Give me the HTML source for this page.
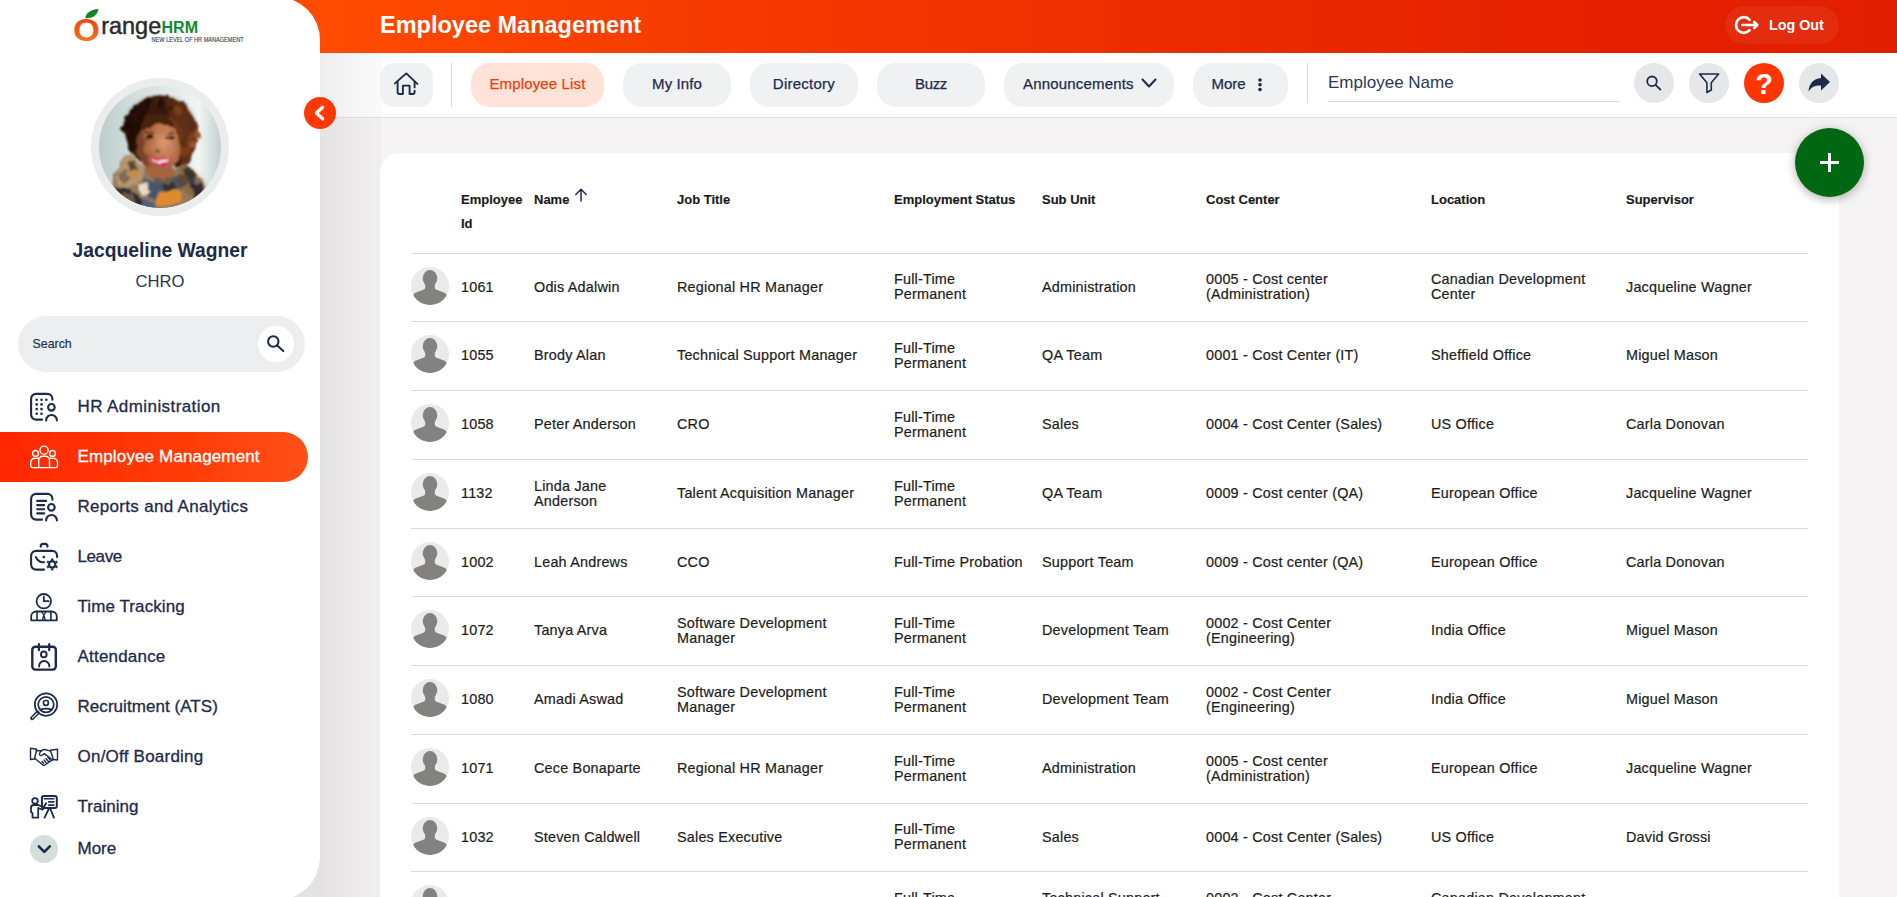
<!DOCTYPE html>
<html lang="en">
<head>
<meta charset="utf-8">
<title>Employee Management</title>
<style>
*{box-sizing:border-box;margin:0;padding:0}
html,body{width:1897px;height:897px;overflow:hidden;background:#f5f3f4;font-family:"Liberation Sans",sans-serif;color:#1e2a4a}
body{position:relative}
svg{display:block;overflow:visible}
#hdr{position:absolute;z-index:2;left:0;top:0;width:1897px;height:53px;background:linear-gradient(90deg,#ff4b00 17%,#f63a00 38%,#ec2c00 62%,#e42000 85%,#e21e00 100%)}
#hdr h1{position:absolute;left:380px;top:11px;font-size:23.5px;line-height:28px;font-weight:bold;color:#fff;white-space:nowrap}
#logout{position:absolute;left:1725px;top:6px;width:114px;height:38px;border-radius:19px;background:rgba(255,255,255,.06);color:#fff;font-size:14.3px;font-weight:bold}
#logout span{position:absolute;left:44px;top:10px;line-height:18px;white-space:nowrap}
#logout svg{position:absolute;left:8px;top:8px}
#nav{position:absolute;z-index:0;left:320px;top:53px;width:1577px;height:65px;background:#fff;border-bottom:1px solid #e2e5e5}
#shadow{position:absolute;z-index:1;left:280px;top:53px;width:102px;height:850px;background:linear-gradient(90deg,rgba(0,0,0,.07) 0,rgba(0,0,0,.07) 40px,rgba(0,0,0,.04) 72px,rgba(0,0,0,.02) 102px)}
#side{position:absolute;z-index:3;left:0;top:-3px;width:320px;height:903px;background:#fff;border-radius:0 43px 43px 0}
#top{position:absolute;z-index:4;left:0;top:0;width:1897px;height:897px;pointer-events:none}
.pill{position:absolute;top:63px;height:44px;border-radius:19px;background:#eff1f3;font-size:15px;color:#1e2a4a;text-align:center;line-height:41px;white-space:nowrap;-webkit-text-stroke:.25px currentColor}
.pill.act{background:#ffe3d8;color:#f23c0a}
.vdiv{position:absolute;top:63px;width:1px;height:40px;background:#cfd9d7}
.cbtn{position:absolute;top:63px;width:40px;height:40px;border-radius:50%;background:#e5e7e8}
.cbtn svg{position:absolute;left:0;top:0}
.mi{position:absolute;left:77.5px;font-size:17px;line-height:22px;color:#1e2a4a;white-space:nowrap;-webkit-text-stroke:.3px currentColor}
.ico{position:absolute;left:30px;width:28px;height:28px}
#card{position:absolute;z-index:1;left:380px;top:153px;width:1459px;height:760px;background:#fff;border-radius:20px 0 0 0}
.th{position:absolute;top:187px;font-size:13px;font-weight:bold;color:#1a1a1a;line-height:24px;white-space:nowrap;-webkit-text-stroke:.15px currentColor}
.row{position:absolute;left:31px;width:1397px;height:69px;border-top:1px solid #dadada}
.row div{position:absolute;top:-0.9px;height:68px;display:flex;align-items:center;font-size:14.4px;letter-spacing:.2px;color:#1c1c1c;line-height:15px;white-space:nowrap;-webkit-text-stroke:.2px currentColor}
.row svg{position:absolute;left:0;top:13px}
</style>
</head>
<body>
<div id="hdr"><h1>Employee Management</h1>
<div id="logout"><svg width="30" height="22" viewBox="0 0 30 22" fill="none" stroke="#fff" stroke-width="2.7" stroke-linecap="round" stroke-linejoin="round"><path d="M16.6 5.8A7.8 7.8 0 1 0 16.6 16.2"/><path d="M9.3 11H24M21.2 8l3 3-3 3"/></svg><span>Log Out</span></div>
</div>
<div id="nav"></div>
<div id="shadow"></div>
<div id="card">
<div class="th" style="left:81px;top:35px">Employee<br>Id</div>
<div class="th" style="left:154px;top:35px">Name<svg style="position:absolute;left:40px;top:0px" width="14" height="14" viewBox="0 0 14 14" fill="none" stroke="#1e2a4a" stroke-width="1.5" stroke-linecap="round" stroke-linejoin="round"><path d="M7 13V1.5M1.8 6.5L7 1.3l5.2 5.2"/></svg></div>
<div class="th" style="left:297px;top:35px">Job Title</div>
<div class="th" style="left:514px;top:35px">Employment Status</div>
<div class="th" style="left:662px;top:35px">Sub Unit</div>
<div class="th" style="left:826px;top:35px">Cost Center</div>
<div class="th" style="left:1051px;top:35px">Location</div>
<div class="th" style="left:1246px;top:35px">Supervisor</div>
<div class="row" style="top:100px;height:68px"><svg width="38" height="38" viewBox="0 0 38 38"><defs><clipPath id="c0"><circle cx="19" cy="19" r="19"/></clipPath></defs><circle cx="19" cy="19" r="19" fill="#eaeaea"/><g clip-path="url(#c0)" fill="#848281"><ellipse cx="19" cy="11.3" rx="7.3" ry="8.3"/><path d="M14.2 14h9.6v6.5c0 1.2.8 1.8 2.5 2.4l6.7 2.6c1.5.6 2.5 1.5 3 3V39H2V28.5c.5-1.5 1.5-2.4 3-3l6.7-2.6c1.7-.6 2.5-1.2 2.5-2.4z"/></g></svg><div style="left:50px;height:68px"><span>1061</span></div><div style="left:123px;height:68px"><span>Odis Adalwin</span></div><div style="left:266px;height:68px"><span>Regional HR Manager</span></div><div style="left:483px;height:68px"><span>Full-Time<br>Permanent</span></div><div style="left:631px;height:68px"><span>Administration</span></div><div style="left:795px;height:68px"><span>0005 - Cost center<br>(Administration)</span></div><div style="left:1020px;height:68px"><span>Canadian Development<br>Center</span></div><div style="left:1215px;height:68px"><span>Jacqueline Wagner</span></div></div>
<div class="row" style="top:168px;height:69px"><svg width="38" height="38" viewBox="0 0 38 38"><defs><clipPath id="c1"><circle cx="19" cy="19" r="19"/></clipPath></defs><circle cx="19" cy="19" r="19" fill="#eaeaea"/><g clip-path="url(#c1)" fill="#848281"><ellipse cx="19" cy="11.3" rx="7.3" ry="8.3"/><path d="M14.2 14h9.6v6.5c0 1.2.8 1.8 2.5 2.4l6.7 2.6c1.5.6 2.5 1.5 3 3V39H2V28.5c.5-1.5 1.5-2.4 3-3l6.7-2.6c1.7-.6 2.5-1.2 2.5-2.4z"/></g></svg><div style="left:50px;height:69px"><span>1055</span></div><div style="left:123px;height:69px"><span>Brody Alan</span></div><div style="left:266px;height:69px"><span>Technical Support Manager</span></div><div style="left:483px;height:69px"><span>Full-Time<br>Permanent</span></div><div style="left:631px;height:69px"><span>QA Team</span></div><div style="left:795px;height:69px"><span>0001 - Cost Center (IT)</span></div><div style="left:1020px;height:69px"><span>Sheffield Office</span></div><div style="left:1215px;height:69px"><span>Miguel Mason</span></div></div>
<div class="row" style="top:237px;height:69px"><svg width="38" height="38" viewBox="0 0 38 38"><defs><clipPath id="c2"><circle cx="19" cy="19" r="19"/></clipPath></defs><circle cx="19" cy="19" r="19" fill="#eaeaea"/><g clip-path="url(#c2)" fill="#848281"><ellipse cx="19" cy="11.3" rx="7.3" ry="8.3"/><path d="M14.2 14h9.6v6.5c0 1.2.8 1.8 2.5 2.4l6.7 2.6c1.5.6 2.5 1.5 3 3V39H2V28.5c.5-1.5 1.5-2.4 3-3l6.7-2.6c1.7-.6 2.5-1.2 2.5-2.4z"/></g></svg><div style="left:50px;height:69px"><span>1058</span></div><div style="left:123px;height:69px"><span>Peter Anderson</span></div><div style="left:266px;height:69px"><span>CRO</span></div><div style="left:483px;height:69px"><span>Full-Time<br>Permanent</span></div><div style="left:631px;height:69px"><span>Sales</span></div><div style="left:795px;height:69px"><span>0004 - Cost Center (Sales)</span></div><div style="left:1020px;height:69px"><span>US Office</span></div><div style="left:1215px;height:69px"><span>Carla Donovan</span></div></div>
<div class="row" style="top:306px;height:69px"><svg width="38" height="38" viewBox="0 0 38 38"><defs><clipPath id="c3"><circle cx="19" cy="19" r="19"/></clipPath></defs><circle cx="19" cy="19" r="19" fill="#eaeaea"/><g clip-path="url(#c3)" fill="#848281"><ellipse cx="19" cy="11.3" rx="7.3" ry="8.3"/><path d="M14.2 14h9.6v6.5c0 1.2.8 1.8 2.5 2.4l6.7 2.6c1.5.6 2.5 1.5 3 3V39H2V28.5c.5-1.5 1.5-2.4 3-3l6.7-2.6c1.7-.6 2.5-1.2 2.5-2.4z"/></g></svg><div style="left:50px;height:69px"><span>1132</span></div><div style="left:123px;height:69px"><span>Linda Jane<br>Anderson</span></div><div style="left:266px;height:69px"><span>Talent Acquisition Manager</span></div><div style="left:483px;height:69px"><span>Full-Time<br>Permanent</span></div><div style="left:631px;height:69px"><span>QA Team</span></div><div style="left:795px;height:69px"><span>0009 - Cost center (QA)</span></div><div style="left:1020px;height:69px"><span>European Office</span></div><div style="left:1215px;height:69px"><span>Jacqueline Wagner</span></div></div>
<div class="row" style="top:375px;height:68px"><svg width="38" height="38" viewBox="0 0 38 38"><defs><clipPath id="c4"><circle cx="19" cy="19" r="19"/></clipPath></defs><circle cx="19" cy="19" r="19" fill="#eaeaea"/><g clip-path="url(#c4)" fill="#848281"><ellipse cx="19" cy="11.3" rx="7.3" ry="8.3"/><path d="M14.2 14h9.6v6.5c0 1.2.8 1.8 2.5 2.4l6.7 2.6c1.5.6 2.5 1.5 3 3V39H2V28.5c.5-1.5 1.5-2.4 3-3l6.7-2.6c1.7-.6 2.5-1.2 2.5-2.4z"/></g></svg><div style="left:50px;height:68px"><span>1002</span></div><div style="left:123px;height:68px"><span>Leah Andrews</span></div><div style="left:266px;height:68px"><span>CCO</span></div><div style="left:483px;height:68px"><span>Full-Time Probation</span></div><div style="left:631px;height:68px"><span>Support Team</span></div><div style="left:795px;height:68px"><span>0009 - Cost center (QA)</span></div><div style="left:1020px;height:68px"><span>European Office</span></div><div style="left:1215px;height:68px"><span>Carla Donovan</span></div></div>
<div class="row" style="top:443px;height:69px"><svg width="38" height="38" viewBox="0 0 38 38"><defs><clipPath id="c5"><circle cx="19" cy="19" r="19"/></clipPath></defs><circle cx="19" cy="19" r="19" fill="#eaeaea"/><g clip-path="url(#c5)" fill="#848281"><ellipse cx="19" cy="11.3" rx="7.3" ry="8.3"/><path d="M14.2 14h9.6v6.5c0 1.2.8 1.8 2.5 2.4l6.7 2.6c1.5.6 2.5 1.5 3 3V39H2V28.5c.5-1.5 1.5-2.4 3-3l6.7-2.6c1.7-.6 2.5-1.2 2.5-2.4z"/></g></svg><div style="left:50px;height:69px"><span>1072</span></div><div style="left:123px;height:69px"><span>Tanya Arva</span></div><div style="left:266px;height:69px"><span>Software Development<br>Manager</span></div><div style="left:483px;height:69px"><span>Full-Time<br>Permanent</span></div><div style="left:631px;height:69px"><span>Development Team</span></div><div style="left:795px;height:69px"><span>0002 - Cost Center<br>(Engineering)</span></div><div style="left:1020px;height:69px"><span>India Office</span></div><div style="left:1215px;height:69px"><span>Miguel Mason</span></div></div>
<div class="row" style="top:512px;height:69px"><svg width="38" height="38" viewBox="0 0 38 38"><defs><clipPath id="c6"><circle cx="19" cy="19" r="19"/></clipPath></defs><circle cx="19" cy="19" r="19" fill="#eaeaea"/><g clip-path="url(#c6)" fill="#848281"><ellipse cx="19" cy="11.3" rx="7.3" ry="8.3"/><path d="M14.2 14h9.6v6.5c0 1.2.8 1.8 2.5 2.4l6.7 2.6c1.5.6 2.5 1.5 3 3V39H2V28.5c.5-1.5 1.5-2.4 3-3l6.7-2.6c1.7-.6 2.5-1.2 2.5-2.4z"/></g></svg><div style="left:50px;height:69px"><span>1080</span></div><div style="left:123px;height:69px"><span>Amadi Aswad</span></div><div style="left:266px;height:69px"><span>Software Development<br>Manager</span></div><div style="left:483px;height:69px"><span>Full-Time<br>Permanent</span></div><div style="left:631px;height:69px"><span>Development Team</span></div><div style="left:795px;height:69px"><span>0002 - Cost Center<br>(Engineering)</span></div><div style="left:1020px;height:69px"><span>India Office</span></div><div style="left:1215px;height:69px"><span>Miguel Mason</span></div></div>
<div class="row" style="top:581px;height:69px"><svg width="38" height="38" viewBox="0 0 38 38"><defs><clipPath id="c7"><circle cx="19" cy="19" r="19"/></clipPath></defs><circle cx="19" cy="19" r="19" fill="#eaeaea"/><g clip-path="url(#c7)" fill="#848281"><ellipse cx="19" cy="11.3" rx="7.3" ry="8.3"/><path d="M14.2 14h9.6v6.5c0 1.2.8 1.8 2.5 2.4l6.7 2.6c1.5.6 2.5 1.5 3 3V39H2V28.5c.5-1.5 1.5-2.4 3-3l6.7-2.6c1.7-.6 2.5-1.2 2.5-2.4z"/></g></svg><div style="left:50px;height:69px"><span>1071</span></div><div style="left:123px;height:69px"><span>Cece Bonaparte</span></div><div style="left:266px;height:69px"><span>Regional HR Manager</span></div><div style="left:483px;height:69px"><span>Full-Time<br>Permanent</span></div><div style="left:631px;height:69px"><span>Administration</span></div><div style="left:795px;height:69px"><span>0005 - Cost center<br>(Administration)</span></div><div style="left:1020px;height:69px"><span>European Office</span></div><div style="left:1215px;height:69px"><span>Jacqueline Wagner</span></div></div>
<div class="row" style="top:650px;height:68px"><svg width="38" height="38" viewBox="0 0 38 38"><defs><clipPath id="c8"><circle cx="19" cy="19" r="19"/></clipPath></defs><circle cx="19" cy="19" r="19" fill="#eaeaea"/><g clip-path="url(#c8)" fill="#848281"><ellipse cx="19" cy="11.3" rx="7.3" ry="8.3"/><path d="M14.2 14h9.6v6.5c0 1.2.8 1.8 2.5 2.4l6.7 2.6c1.5.6 2.5 1.5 3 3V39H2V28.5c.5-1.5 1.5-2.4 3-3l6.7-2.6c1.7-.6 2.5-1.2 2.5-2.4z"/></g></svg><div style="left:50px;height:68px"><span>1032</span></div><div style="left:123px;height:68px"><span>Steven Caldwell</span></div><div style="left:266px;height:68px"><span>Sales Executive</span></div><div style="left:483px;height:68px"><span>Full-Time<br>Permanent</span></div><div style="left:631px;height:68px"><span>Sales</span></div><div style="left:795px;height:68px"><span>0004 - Cost Center (Sales)</span></div><div style="left:1020px;height:68px"><span>US Office</span></div><div style="left:1215px;height:68px"><span>David Grossi</span></div></div>
<div class="row" style="top:718px;height:69px"><svg width="38" height="38" viewBox="0 0 38 38"><defs><clipPath id="c9"><circle cx="19" cy="19" r="19"/></clipPath></defs><circle cx="19" cy="19" r="19" fill="#eaeaea"/><g clip-path="url(#c9)" fill="#848281"><ellipse cx="19" cy="11.3" rx="7.3" ry="8.3"/><path d="M14.2 14h9.6v6.5c0 1.2.8 1.8 2.5 2.4l6.7 2.6c1.5.6 2.5 1.5 3 3V39H2V28.5c.5-1.5 1.5-2.4 3-3l6.7-2.6c1.7-.6 2.5-1.2 2.5-2.4z"/></g></svg><div style="left:50px;height:69px"><span>1048</span></div><div style="left:123px;height:69px"><span>Kevin Chen</span></div><div style="left:266px;height:69px"><span>Technical Support Engineer</span></div><div style="left:483px;height:69px"><span>Full-Time<br>Permanent</span></div><div style="left:631px;height:69px"><span>Technical Support<br>Team</span></div><div style="left:795px;height:69px"><span>0002 - Cost Center<br>(Engineering)</span></div><div style="left:1020px;height:69px"><span>Canadian Development<br>Center</span></div><div style="left:1215px;height:69px"><span>Miguel Mason</span></div></div>
</div>
<div id="top">
<div class="pill" style="left:380px;width:53px;border-radius:14px"><svg style="position:absolute;left:13px;top:8px" width="26" height="26" viewBox="0 0 26 26" fill="none" stroke="#1e2a4a" stroke-width="1.9" stroke-linecap="round" stroke-linejoin="round"><path d="M1.9 12.4L13.3 2.4 24.4 12.9"/><path d="M4.6 10.5V21a2 2 0 0 0 2 2H9.9V14.6h6.7V23H19.6a2 2 0 0 0 2-2V19.6M21.6 16.4V10.6"/></svg></div>
<div class="vdiv" style="left:451px;height:44px"></div>
<div class="pill act" style="left:471px;width:133px;letter-spacing:.14px">Employee List</div>
<div class="pill" style="left:623px;width:108px;letter-spacing:.1px">My Info</div>
<div class="pill" style="left:750px;width:108px;letter-spacing:.25px">Directory</div>
<div class="pill" style="left:877px;width:108px;letter-spacing:-.3px">Buzz</div>
<div class="pill" style="left:1004px;width:170px;letter-spacing:.18px;text-align:left;padding-left:19px">Announcements<svg style="position:absolute;left:137px;top:15px" width="16" height="10" viewBox="0 0 16 10" fill="none" stroke="#1e2a4a" stroke-width="2" stroke-linecap="round" stroke-linejoin="round"><path d="M1.5 1.5L8 8.5l6.5-7"/></svg></div>
<div class="pill" style="left:1193px;width:95px;text-align:left;padding-left:18.5px">More<svg style="position:absolute;left:64px;top:14px" width="6" height="16" viewBox="0 0 6 16" fill="#1e2a4a"><circle cx="3" cy="3" r="1.8"/><circle cx="3" cy="7.8" r="1.8"/><circle cx="3" cy="12.6" r="1.8"/></svg></div>
<div class="vdiv" style="left:1307px"></div>
<div style="position:absolute;left:1328px;top:72px;font-size:17px;line-height:22px;color:#2b3855;white-space:nowrap">Employee Name</div>
<div style="position:absolute;left:1328px;top:101px;width:291px;height:1px;background:#d9dcdf"></div>
<div class="cbtn" style="left:1634px"><svg width="40" height="40" viewBox="0 0 40 40" fill="none" stroke="#1e2a4a" stroke-width="1.8" stroke-linecap="round"><circle cx="18" cy="18.3" r="4.8"/><path d="M21.6 21.9l4.8 4.7"/></svg></div>
<div class="cbtn" style="left:1689px"><svg width="40" height="40" viewBox="0 0 40 40" fill="none" stroke="#1e2a4a" stroke-width="1.6" stroke-linejoin="round"><path d="M10.6 11h19l-7.3 8.7v7.3l-4.4 2.5V19.7z"/></svg></div>
<div class="cbtn" style="left:1744px;background:#ff3503;color:#fff;font-weight:bold;font-size:29px;line-height:43px;text-align:center">?</div>
<div class="cbtn" style="left:1799px"><svg width="40" height="40" viewBox="0 0 40 40" fill="#1e2a4a"><path d="M22 10.5l9 8.5-9 8.5v-5c-6-.5-9.5 1.5-12.5 6 .5-7 4-12.5 12.5-13.5z"/></svg></div>
<div style="position:absolute;left:304px;top:97px;width:32px;height:32px;border-radius:50%;background:#ff3806"><svg width="32" height="32" viewBox="0 0 32 32" fill="none" stroke="#fff" stroke-width="3.3" stroke-linecap="round" stroke-linejoin="round"><path d="M18.6 10.2L12.3 16l6.3 5.8"/></svg></div>
<div style="position:absolute;left:1795px;top:128px;width:69px;height:69px;border-radius:50%;background:#006812;box-shadow:0 3px 8px rgba(0,0,0,.22),0 0 14px rgba(0,0,0,.1)"><svg width="69" height="69" viewBox=".5 .5 69 69" stroke="#fff" stroke-width="3" fill="none"><path d="M35 25.5v19M25.5 35h19"/></svg></div>
</div>
<div id="side"></div>
<div id="sidec" style="position:absolute;z-index:3;left:0;top:0;width:320px;height:897px">
<!-- logo -->
<svg style="position:absolute;left:70px;top:4px" width="180" height="44" viewBox="70 4 180 44">
<defs><linearGradient id="lgo" x1="0" y1="0" x2="0" y2="1"><stop offset="0" stop-color="#f23c10"/><stop offset=".55" stop-color="#f25a1a"/><stop offset="1" stop-color="#f6891f"/></linearGradient></defs>
<path d="M85.3 18.2C85.5 12.5 91 9.5 98.5 9 97.5 15.5 92 18.8 85.3 18.2z" fill="#178a2c"/>
<path d="M86 18C89 15 93 12 97 10" stroke="#0c5c1a" stroke-width=".6" fill="none"/>
<text y="33.8" font-family="Liberation Sans, sans-serif"><tspan x="73.1" y="40.9" font-size="30.5" font-weight="bold" fill="url(#lgo)" textLength="27" lengthAdjust="spacingAndGlyphs">O</tspan><tspan x="101.2" y="33.8" font-size="23.5" fill="#2a2a2e" stroke="#2a2a2e" stroke-width=".45" textLength="60" lengthAdjust="spacingAndGlyphs">range</tspan></text>
<text x="161.5" y="33" font-family="Liberation Sans, sans-serif" font-size="16" font-weight="bold" fill="#128a2e" textLength="36.5" lengthAdjust="spacingAndGlyphs">HRM</text>
<text x="151.6" y="41.8" font-family="Liberation Sans, sans-serif" font-size="6.8" fill="#3d4852" stroke="#3d4852" stroke-width=".15" textLength="92" lengthAdjust="spacingAndGlyphs">NEW LEVEL OF HR MANAGEMENT</text>
</svg>
<svg style="position:absolute;left:91px;top:78px" width="138" height="138" viewBox="91 78 138 138">
<defs><clipPath id="avc"><circle cx="160" cy="147" r="61"/></clipPath><filter id="bl1" x="-20%" y="-20%" width="140%" height="140%"><feTurbulence type="fractalNoise" baseFrequency=".11" numOctaves="2" seed="4" result="n"/><feDisplacementMap in="SourceGraphic" in2="n" scale="7" xChannelSelector="R" yChannelSelector="G" result="d"/><feGaussianBlur in="d" stdDeviation=".9"/></filter><filter id="bl2" x="-20%" y="-20%" width="140%" height="140%"><feGaussianBlur stdDeviation="2.6"/></filter><linearGradient id="avbg" x1="0" x2="1" y1="0" y2="0"><stop offset="0" stop-color="#bccaca"/><stop offset=".3" stop-color="#d3dede"/><stop offset=".62" stop-color="#e3eaea"/><stop offset=".8" stop-color="#f2f5f3"/><stop offset=".9" stop-color="#d5dfdf"/><stop offset="1" stop-color="#b9c7c8"/></linearGradient><radialGradient id="avsk" cx=".62" cy=".45" r=".7"><stop offset="0" stop-color="#dc9670"/><stop offset=".4" stop-color="#bd764e"/><stop offset="1" stop-color="#7c4228"/></radialGradient></defs>
<circle cx="160" cy="147" r="69" fill="#ebecec"/>
<g clip-path="url(#avc)">
<rect x="95" y="82" width="130" height="130" fill="url(#avbg)"/>
<g filter="url(#bl2)">
<ellipse cx="160" cy="127" rx="34" ry="29" fill="#3a1a0c"/>
<ellipse cx="162" cy="192" rx="44" ry="26" fill="#8c7458"/>
</g>
<g filter="url(#bl1)">
<path d="M124.7 121.1 131.2 109.5 142.8 99.4 155.9 95.8 170.4 97.9 182 103.7 192.1 115.3 197.2 126.9 196.4 140 195 150.1 189.2 163.2 182 169 173.3 163.2 138.5 160.3 130.5 151.6 126.2 137.1z" fill="#3a190b"/>
<path d="M163.1 99.4 176.2 100.8 187.8 109.5 196.4 124 197.2 140 193.6 153 187.8 163.9 182 167.5 179.8 151.6 182 137.1 178.3 124 170.4 113.9z" fill="#5e2d14"/>
<path d="M124.7 121.1 131.2 109.5 142.8 100.1 153 97.9 147.2 111 141.4 122.6 137 137.1 134.1 150.1 129.8 150.1 126.2 137.1z" fill="#200c06"/>
<circle cx="150" cy="103.7" r="2.2" fill="#2a1008"/>
<circle cx="155.5" cy="103.5" r="2.1" fill="#3e1b0c"/>
<circle cx="130.2" cy="127.4" r="3.9" fill="#1c0a05"/>
<circle cx="136.3" cy="108.7" r="3.4" fill="#1c0a05"/>
<circle cx="181.4" cy="154.4" r="2.7" fill="#5a2a12"/>
<circle cx="130.2" cy="121" r="2.4" fill="#1c0a05"/>
<circle cx="188.5" cy="115.4" r="2.2" fill="#5a2a12"/>
<circle cx="134.3" cy="113.1" r="2.8" fill="#1c0a05"/>
<circle cx="167.2" cy="101.3" r="3.6" fill="#3e1b0c"/>
<circle cx="183.2" cy="107.6" r="3.7" fill="#5a2a12"/>
<circle cx="181.4" cy="152.1" r="3.8" fill="#5a2a12"/>
<circle cx="171.4" cy="103.5" r="3.8" fill="#5a2a12"/>
<circle cx="190.9" cy="143.3" r="3.4" fill="#7a3e1a"/>
<circle cx="168.4" cy="100.2" r="3.1" fill="#5a2a12"/>
<circle cx="125.6" cy="128.3" r="4.3" fill="#1c0a05"/>
<circle cx="144.4" cy="105.7" r="2.1" fill="#2a1008"/>
<circle cx="134.4" cy="118.3" r="3.8" fill="#1c0a05"/>
<circle cx="140.1" cy="107" r="2.2" fill="#2a1008"/>
<circle cx="181.8" cy="106" r="4" fill="#5a2a12"/>
<circle cx="162" cy="100" r="4.2" fill="#2a1008"/>
<circle cx="134.3" cy="116.8" r="3.2" fill="#1c0a05"/>
<circle cx="143.4" cy="108.8" r="2.9" fill="#2a1008"/>
<circle cx="187" cy="150.4" r="3.5" fill="#7a3e1a"/>
<circle cx="124.1" cy="129.1" r="4.1" fill="#1c0a05"/>
<circle cx="158.8" cy="106.3" r="3.5" fill="#2a1008"/>
<circle cx="129.3" cy="128" r="2.8" fill="#1c0a05"/>
<circle cx="129.8" cy="135.2" r="2.9" fill="#1c0a05"/>
<circle cx="192.9" cy="141.4" r="2.6" fill="#7a3e1a"/>
<circle cx="155.2" cy="100.8" r="4.3" fill="#3e1b0c"/>
<circle cx="170.8" cy="107.6" r="2.8" fill="#3e1b0c"/>
<circle cx="191.8" cy="136.5" r="4.2" fill="#7a3e1a"/>
<circle cx="130.2" cy="120.3" r="3.3" fill="#2a1008"/>
<circle cx="194.1" cy="140.6" r="2.9" fill="#7a3e1a"/>
<circle cx="195.2" cy="130.5" r="2.8" fill="#7a3e1a"/>
<circle cx="198.1" cy="135.7" r="3.9" fill="#97552a"/>
<circle cx="192.6" cy="126.7" r="2.9" fill="#5a2a12"/>
<circle cx="128.5" cy="132.3" r="3.6" fill="#2a1008"/>
<circle cx="167.2" cy="99.7" r="4.2" fill="#3e1b0c"/>
<circle cx="138.1" cy="113.2" r="2.5" fill="#2a1008"/>
<circle cx="192.6" cy="145.2" r="3.5" fill="#97552a"/>
<circle cx="126.4" cy="124.9" r="3.8" fill="#1c0a05"/>
<circle cx="170.3" cy="102.1" r="2.8" fill="#5a2a12"/>
<circle cx="183.6" cy="151.4" r="4.2" fill="#7a3e1a"/>
<circle cx="134.4" cy="117.7" r="4.1" fill="#2a1008"/>
<circle cx="128.4" cy="117" r="3.6" fill="#1c0a05"/>
<circle cx="178.6" cy="111.2" r="4.3" fill="#7a3e1a"/>
<ellipse cx="158.8" cy="145.8" rx="21.7" ry="29.7" fill="url(#avsk)"/>
<path d="M145.7 167.5 173.3 169 176.2 183.4 150.1 186.3z" fill="#a8643e"/>
<path d="M138.5 129.8 142.8 118.2 155.9 113.2 170.4 114.6 179.1 122.6 182 134.2 176.2 128.4 163.1 124 150.1 125.5 141.4 134.2z" fill="#4a2210"/>
<path d="M167.5 115.3 179.1 121.1 183.4 135.6 180.5 142.9 178.3 131.3 173.3 124z" fill="#6e3618"/>
<path d="M136.3 137.1 142.8 129.8 144.3 151.6 150.1 169 142.8 163.2 137.8 150.1z" fill="#7a4228"/>
<ellipse cx="149.3" cy="137.8" rx="4.2" ry="1.7" fill="#2a1208"/>
<ellipse cx="149.3" cy="133.3" rx="5" ry="1" fill="#3a1a0c"/>
<ellipse cx="170.4" cy="137.8" rx="4.2" ry="1.7" fill="#2a1208"/>
<ellipse cx="170.4" cy="133.3" rx="5" ry="1" fill="#3a1a0c"/>
<ellipse cx="158.8" cy="150.1" rx="3.5" ry="2" fill="#9a5a3a"/>
<path d="M149.3 158.8 155.9 157.4 160.2 158.2 166 157.1 171.1 158.5 167.5 163.9 160.9 166.1 154.4 163.9z" fill="#cf2a5c"/>
<path d="M152.2 159.5 160.2 160 168.9 159.2 166 162 160.2 162.9 155.1 162z" fill="#f7e9e6"/>
<path d="M110.9 192.1 113.8 174.8 124 157.4 131.2 153 138.5 163.2 150.1 174.8 163.1 180.6 176.2 174.8 182 163.2 190.7 169 200.8 180.6 206.6 192.1 196.4 212.4 124 212.4z" fill="#94795a"/>
<path d="M124 157.4 131.2 153 138.5 163.2 144.3 171.9 138.5 183.4 128.3 189.2 116.7 186.3 116.7 174.8z" fill="#b3966f"/>
<path d="M142.8 177.7 155.9 182 167.5 182 176.2 176.2 182 186.3 176.2 197.9 160.2 202.3 147.2 196.5z" fill="#48536b"/>
<path d="M182 163.2 190.7 169 200.8 180.6 199.3 189.2 189.2 196.5 182 186.3 179.8 174.8z" fill="#8a6a48"/>
<path d="M115.3 187.8 128.3 189.2 138.5 195 142.8 206.6 124 209.5 113.8 197.9z" fill="#2b2a35"/>
<path d="M157.3 193.6 170.4 189.2 182 192.1 180.5 202.3 167.5 206.6 157.3 203.7z" fill="#dd8b2e"/>
<path d="M138.5 183.4 147.2 182 150.1 192.1 142.8 196.5z" fill="#e9dcc4"/>
<path d="M187.8 171.9 196.4 177.7 195 186.3 187.8 183.4z" fill="#3a4257"/>
<path d="M131.2 169 138.5 171.9 137 179.1 129.8 177.7z" fill="#c98a45"/>
<path d="M118.2 174.8 125.4 169 129.8 177.7 124 186.3z" fill="#7f6a55"/>
<path d="M176.2 176.2 184.9 174.8 189.2 183.4 182 189.2z" fill="#5b4a3a"/>
<path d="M150.1 174.8 163.1 180.6 173.3 176.2 170.4 183.4 155.9 183.4z" fill="#6b5a4a"/>
<path d="M190.7 183.4 202.2 183.4 205.1 195 193.6 197.9z" fill="#2f2c33"/>
<path d="M142.8 197.9 155.9 202.3 157.3 209.5 142.8 209.5z" fill="#55607a"/>
<path d="M126.9 163.2 134.1 160.3 137 169 129.8 171.9z" fill="#5a4632"/>
<path d="M182 169 189.2 167.5 195 176.2 187.8 180.6z" fill="#3d3028"/>
<path d="M163.1 183.4 173.3 182 176.2 189.2 164.6 190.7z" fill="#33302f"/>
<path d="M121.1 192.1 132.7 193.6 135.6 202.3 124 203.7z" fill="#6e5a44"/>
</g></g></svg>

<div style="position:absolute;left:0;top:239px;width:320px;text-align:center;font-size:19.3px;line-height:24px;font-weight:bold;color:#1e2a4a">Jacqueline Wagner</div>
<div style="position:absolute;left:0;top:271px;width:320px;text-align:center;font-size:16.6px;line-height:22px;color:#27334f">CHRO</div>
<div style="position:absolute;left:18px;top:316px;width:287px;height:56px;border-radius:28px;background:#eceef0"></div>
<div style="position:absolute;left:32.5px;top:336px;font-size:12.4px;line-height:16px;color:#27334f;-webkit-text-stroke:.2px currentColor">Search</div>
<div style="position:absolute;left:258px;top:325.5px;width:36px;height:36px;border-radius:50%;background:#fff"><svg width="36" height="36" viewBox="0 0 36 36" fill="none" stroke="#1e2a4a" stroke-width="2" stroke-linecap="round"><circle cx="15.3" cy="15.5" r="5.2"/><path d="M19.3 19.5l6 5.5"/></svg></div>
<div style="position:absolute;left:0;top:432px;width:308px;height:50px;border-radius:0 25px 25px 0;background:linear-gradient(90deg,#ff2700,#ff3c08 60%,#ff5018)"></div>
<svg class="ico" style="top:393px" viewBox="0 0 28 28" fill="none" stroke="#1e2a4a" stroke-width="2.1" stroke-linecap="round" stroke-linejoin="round"><path d="M12.1 26.6H6.1A5 5 0 0 1 1.1 21.6V5.9A5 5 0 0 1 6.1 .9H17.4a5 5 0 0 1 5 5V6.7"/><g fill="#1e2a4a" stroke="none"><circle cx="6.7" cy="6.7" r="1.3"/><circle cx="11.5" cy="6.7" r="1.3"/><circle cx="16.3" cy="6.7" r="1.3"/><circle cx="6.7" cy="11.4" r="1.3"/><circle cx="11.5" cy="11.4" r="1.3"/><circle cx="6.7" cy="16.1" r="1.3"/><circle cx="11.5" cy="16.1" r="1.3"/><circle cx="6.7" cy="20.8" r="1.3"/><circle cx="11.5" cy="20.8" r="1.3"/></g><circle cx="21.4" cy="14.3" r="3.3"/><path d="M16.1 27.5v-.1a5.4 5.4 0 0 1 10.8 0v.1"/></svg>
<div class="mi" style="top:396px;letter-spacing:.42px">HR Administration</div>
<svg class="ico" style="top:442px" viewBox="0 0 28 28" fill="none" stroke="#fff" stroke-width="1.4" stroke-linecap="round" stroke-linejoin="round"><circle cx="14" cy="8.2" r="4.1"/><circle cx="5.5" cy="11.4" r="2.9"/><circle cx="22.5" cy="11.4" r="2.9"/><path d="M8.7 25.6V18.3a4 4 0 0 1 4-4h2.8a4 4 0 0 1 4 4V25.6"/><path d="M8.7 25.6H2.5A1.8 1.8 0 0 1 .7 23.8V20.5a4.2 4.2 0 0 1 4.2-4.2H8.7"/><path d="M19.5 25.6h6.2a1.8 1.8 0 0 0 1.8-1.8V20.5a4.2 4.2 0 0 0-4.2-4.2H19.5"/><path d="M8.7 25.6h10.8"/></svg>
<div class="mi" style="top:446px;letter-spacing:.14px;color:#fff">Employee Management</div>
<svg class="ico" style="top:493px" viewBox="0 0 28 28" fill="none" stroke="#1e2a4a" stroke-width="2.1" stroke-linecap="round" stroke-linejoin="round"><path d="M12.1 26.6H6.1A5 5 0 0 1 1.1 21.6V5.9A5 5 0 0 1 6.1 .9H17.4a5 5 0 0 1 5 5V6.7"/><path d="M7.2 7.9h8.9M7.2 12.1h7M7.2 16.3h7M7.2 20.4h7"/><circle cx="21.4" cy="14.3" r="3.3"/><path d="M16.1 27.5v-.1a5.4 5.4 0 0 1 10.8 0v.1"/></svg>
<div class="mi" style="top:496px;letter-spacing:.3px">Reports and Analytics</div>
<svg class="ico" style="top:543px" viewBox="0 0 28 28" fill="none" stroke="#1e2a4a" stroke-width="2.1" stroke-linecap="round" stroke-linejoin="round"><path d="M10.7 3.8v-.4a2.5 2.5 0 0 1 2.5-2.5h1.8a2.5 2.5 0 0 1 2.5 2.5v.4"/><path d="M14.1 26.6H6.1A5 5 0 0 1 1.1 21.6V12.9A5 5 0 0 1 6.1 7.9H22.1a5 5 0 0 1 5 5V14.1"/><path d="M6 14.1a8 8 0 0 0 8.1 5.1"/><circle cx="13.8" cy="14.1" r="1.3" fill="#1e2a4a" stroke="none"/><circle cx="22.2" cy="21.4" r="3.2" stroke-width="2.2"/><path stroke-width="2.4" stroke-linecap="butt" d="M22.2 17.2v-1.7M22.2 25.6v1.7M25.84 19.3l1.47-.85M25.84 23.5l1.47.85M18.56 19.3l-1.47-.85M18.56 23.5l-1.47.85"/></svg>
<div class="mi" style="top:546px;letter-spacing:-.4px">Leave</div>
<svg class="ico" style="top:593px" viewBox="0 0 28 28" fill="none" stroke="#1e2a4a" stroke-width="1.8" stroke-linecap="round" stroke-linejoin="round"><circle cx="13.8" cy="8.2" r="7.2"/><path d="M13.8 3.7V8.2H18.6"/><path d="M1.2 27.3V23.5a5 5 0 0 1 5-5H21.8a5 5 0 0 1 5 5v3.8z"/><path d="M7 18.8V27M20.9 18.8V27" stroke-width="1.6"/><path d="M11.7 18.8l2.1 3.2 2.1-3.2M13.8 22l-1.4 5M13.8 22l1.4 5" stroke-width="1.3"/></svg>
<div class="mi" style="top:596px;letter-spacing:.09px">Time Tracking</div>
<svg class="ico" style="top:643px" viewBox="0 0 28 28" fill="none" stroke="#1e2a4a" stroke-width="2.4" stroke-linecap="round" stroke-linejoin="round"><rect x="2.3" y="3.8" width="23.5" height="22.8" rx="3"/><path d="M8.9 1.2V7.2M19.2 1.2V7.2" stroke-width="2.2"/><circle cx="13.8" cy="11.4" r="2.85" stroke-width="1.9"/><path stroke-width="1.9" d="M9.1 23.5v-.4a5.1 5.1 0 0 1 10.2 0v.4"/></svg>
<div class="mi" style="top:646px;letter-spacing:.2px">Attendance</div>
<svg class="ico" style="top:693px" viewBox="0 0 28 28" fill="none" stroke="#1e2a4a" stroke-width="1.7" stroke-linecap="round" stroke-linejoin="round"><circle cx="16" cy="11.6" r="11.2"/><circle cx="16" cy="11.6" r="7.8"/><rect x="13.5" y="7.5" width="4.8" height="4.8" rx="2"/><path d="M10.3 16.6c3.5-1.3 7.9-1.3 11.4 0"/><path d="M7.6 19.7L2.2 25.2" stroke-width="4"/><path d="M7 20.3L2.5 24.9" stroke="#fff" stroke-width="1.1"/></svg>
<div class="mi" style="top:696px;letter-spacing:.05px">Recruitment (ATS)</div>
<svg class="ico" style="top:743px" viewBox="0 0 28 28" fill="none" stroke="#1e2a4a" stroke-width="1.4" stroke-linecap="round" stroke-linejoin="round"><path d="M.5 5.2l6.2 1-2.2 9.8-4 .5zM27.5 6.2l-7.1 1 3 9.3 4.1.5z"/><path d="M6.4 7.7h5.2c1-.8 1.8-1.2 2.7-1.2 1 0 3.8 1 6.1 1.7"/><path d="M11.6 7.7c-1.2 1-2.2 2.2-2.2 3.4.3 1.2 1.2 1.6 1.7 1.5 1.2-.3 2.2-1.3 3.2-2l7.1 5.4"/><path d="M5 15.5l8 6.5c.6.5 1.3.5 1.9 0l6.5-4.5 2-1"/><path d="M12.1 18.5l1.5 1.7M14.1 17l1.9 2.5M16 15.5l2.5 3M18 14.3l2.4 2.7"/></svg>
<div class="mi" style="top:746px;letter-spacing:.23px">On/Off Boarding</div>
<svg class="ico" style="top:793px" viewBox="0 0 28 28" fill="none" stroke="#1e2a4a" stroke-width="1.8" stroke-linecap="round" stroke-linejoin="round"><circle cx="5" cy="7.9" r="2.8"/><path d="M2.5 24.6V20.3L1 19V14.6a2.6 2.6 0 0 1 2.6-2.6H8.5l5 2.5-.9 2.2-4.4-1.7V24.6z"/><path d="M13.3 15.2l2.7-5"/><rect x="11.9" y="3" width="14.9" height="12" rx="2" stroke-width="2"/><path d="M14.3 5.7h9.6M18.7 8.9h5.2M18.7 12.1h5.2" stroke-width="1.6"/><path d="M18.7 16l-4.1 8.6M20.4 16l3.5 8.6"/></svg>
<div class="mi" style="top:796px;letter-spacing:.02px">Training</div>
<div style="position:absolute;left:30px;top:835px;width:28px;height:28px;border-radius:50%;background:#d5dedc"><svg width="28" height="28" viewBox="0 0 28 28" fill="none" stroke="#1e2a4a" stroke-width="2.6" stroke-linecap="round" stroke-linejoin="round"><path d="M8.8 11.3l5.5 5.5 5.5-5.5"/></svg></div>
<div class="mi" style="top:838px">More</div>

</div>
</body>
</html>
